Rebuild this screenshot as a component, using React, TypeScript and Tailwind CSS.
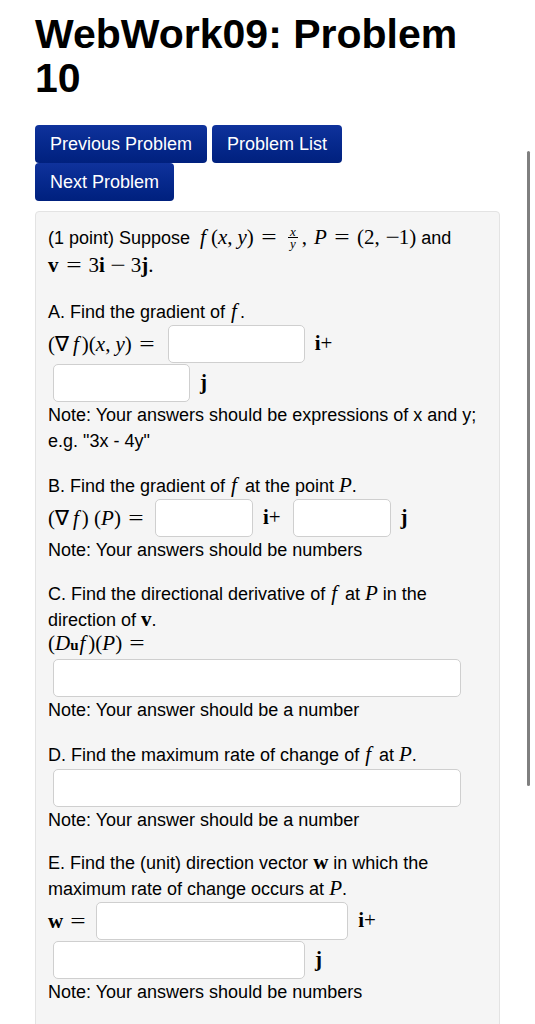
import React from 'react';

const sans = "font-['Liberation_Sans',Arial,sans-serif]";
const serif = "font-['Liberation_Serif','Times_New_Roman',serif]";

// small helpers for the MathJax-looking bits
const I = ({ children }: { children: React.ReactNode }) => (
  <span className={`${serif} italic text-[21px] leading-none`}>{children}</span>
);
const M = ({ children }: { children: React.ReactNode }) => (
  <span className={`${serif} text-[21px] leading-none`}>{children}</span>
);
const B = ({ children }: { children: React.ReactNode }) => (
  <span className={`${serif} font-bold text-[21px] leading-none`}>{children}</span>
);
// italic f with a little italic correction after it
const F = () => <span className={`${serif} italic text-[21px] leading-none pl-[1px] pr-[3px]`}>f</span>;
const Nabla = () => <span className={`${serif} text-[21px] leading-none mr-[3px]`}>∇</span>;
const Eq = () => (
  <span className={`${serif} mx-[8px] inline-block w-[14px] scale-x-[1.3] text-center text-[21px] leading-none`}>=</span>
);
const Minus = () => (
  <span className={`${serif} mx-[7px] inline-block w-[12px] scale-x-[1.3] text-center text-[21px] leading-none`}>−</span>
);
const Comma = () => <span className={`${serif} text-[21px] leading-none mr-[5px]`}>,</span>;

const Box = ({ w }: { w: string }) => (
  <span className={`inline-block h-[38px] ${w} rounded-[5px] border border-[#cfcfcf] bg-white`} />
);

const Btn = ({ label }: { label: string }) => (
  <button className="h-[38px] rounded-[4px] bg-gradient-to-b from-[#0f329c] to-[#00207e] px-[15px] text-[18px] text-white">
    {label}
  </button>
);

export default function App() {
  return (
    <div className={`${sans} relative min-h-screen bg-white px-[35px] pt-3 text-black`}>
      <h1 className="text-[41px] font-bold leading-[44px]">
        WebWork09: Problem
        <br />
        10
      </h1>

      <div className="mt-[25px] flex w-[330px] flex-wrap gap-x-[5px]">
        <Btn label="Previous Problem" />
        <Btn label="Problem List" />
        <Btn label="Next Problem" />
      </div>

      <div className="mt-[10px] h-[900px] rounded-[4px] border border-[#e3e3e3] bg-[#f5f5f5] pl-[12px] pr-3 pt-[12px] text-[18px] leading-[26px]">
        <p className="leading-[28px]">
          (1 point) Suppose <span className="ml-[4px]"><F /></span>
          <span className="ml-[2px]"><M>(</M></span><I>x</I><Comma /><I>y</I><M>)</M><Eq />
          <span className={`${serif} italic relative mx-[4px] inline-flex -translate-y-[2px] flex-col items-center align-middle text-[13px] leading-[11px]`}>
            <span>x</span>
            <span className="h-px w-[10px] bg-black" />
            <span>y</span>
          </span>
          <Comma /><span className="ml-[2px]"><I>P</I></span><Eq /><M>(2</M><Comma />
          <span className={`${serif} ml-[1px] inline-block w-[13px] scale-x-[1.2] text-center text-[21px] leading-none`}>−</span>
          <M>1)</M> and
          <br />
          <B>v</B><Eq /><M>3</M><B>i</B><Minus /><M>3</M><B>j</B><M>.</M>
        </p>

        <p className="mt-[19px]">
          A. Find the gradient of <F />.
        </p>
        <div className="flex h-[38px] items-center">
          <M>(</M><Nabla /><F /><M>)(</M><I>x</I><Comma /><I>y</I><M>)</M><Eq />
          <span className="ml-[6px] flex items-center">
            <Box w="w-[137px]" />
          </span>
          <span className="ml-[10px]"><B>i</B><M>+</M></span>
        </div>
        <div className="mt-[1px] flex h-[38px] items-center pl-[5px]">
          <Box w="w-[137px]" />
          <span className="ml-[10px]"><B>j</B></span>
        </div>
        <p>
          Note: Your answers should be expressions of x and y;
          <br />
          e.g. "3x - 4y"
        </p>

        <p className="mt-[19px]">
          B. Find the gradient of <F /> at the point <I>P</I>.
        </p>
        <div className="flex h-[38px] items-center">
          <M>(</M><Nabla /><F /><M>)&nbsp;(</M><I>P</I><M>)</M><Eq />
          <span className="ml-[4px] flex items-center">
            <Box w="w-[98px]" />
          </span>
          <span className="ml-[10px]"><B>i</B><M>+</M></span>
          <span className="ml-[12px] flex items-center">
            <Box w="w-[98px]" />
          </span>
          <span className="ml-[10px]"><B>j</B></span>
        </div>
        <p>Note: Your answers should be numbers</p>

        <p className="mt-[18px]">
          C. Find the directional derivative of <F /> at <I>P</I> in the
          <br />
          direction of <B>v</B>.
        </p>
        <p className="-mt-[1px] leading-[24px]">
          <M>(</M><I>D</I><span className={`${serif} font-bold text-[15px] leading-none`}>u</span><F /><M>)(</M><I>P</I><M>)</M><Eq />
        </p>
        <div className="mt-[3px] flex pl-[5px]">
          <Box w="w-[408px]" />
        </div>
        <p>Note: Your answer should be a number</p>

        <p className="mt-[19px]">
          D. Find the maximum rate of change of <F /> at <I>P</I>.
        </p>
        <div className="mt-[1px] flex pl-[5px]">
          <Box w="w-[408px]" />
        </div>
        <p>Note: Your answer should be a number</p>

        <p className="mt-[17px]">
          E. Find the (unit) direction vector <B>w</B> in which the
          <br />
          maximum rate of change occurs at <I>P</I>.
        </p>
        <div className="flex h-[38px] items-center">
          <B>w</B><Eq />
          <span className="ml-[3px] flex items-center">
            <Box w="w-[252px]" />
          </span>
          <span className="ml-[10px]"><B>i</B><M>+</M></span>
        </div>
        <div className="mt-[1px] flex h-[38px] items-center pl-[5px]">
          <Box w="w-[252px]" />
          <span className="ml-[10px]"><B>j</B></span>
        </div>
        <p>Note: Your answers should be numbers</p>
      </div>

      {/* overlay scrollbar from the phone screenshot */}
      <div className="absolute left-[527px] top-[151px] h-[635px] w-[3px] rounded-full bg-[#7f7f7f]" />
    </div>
  );
}
